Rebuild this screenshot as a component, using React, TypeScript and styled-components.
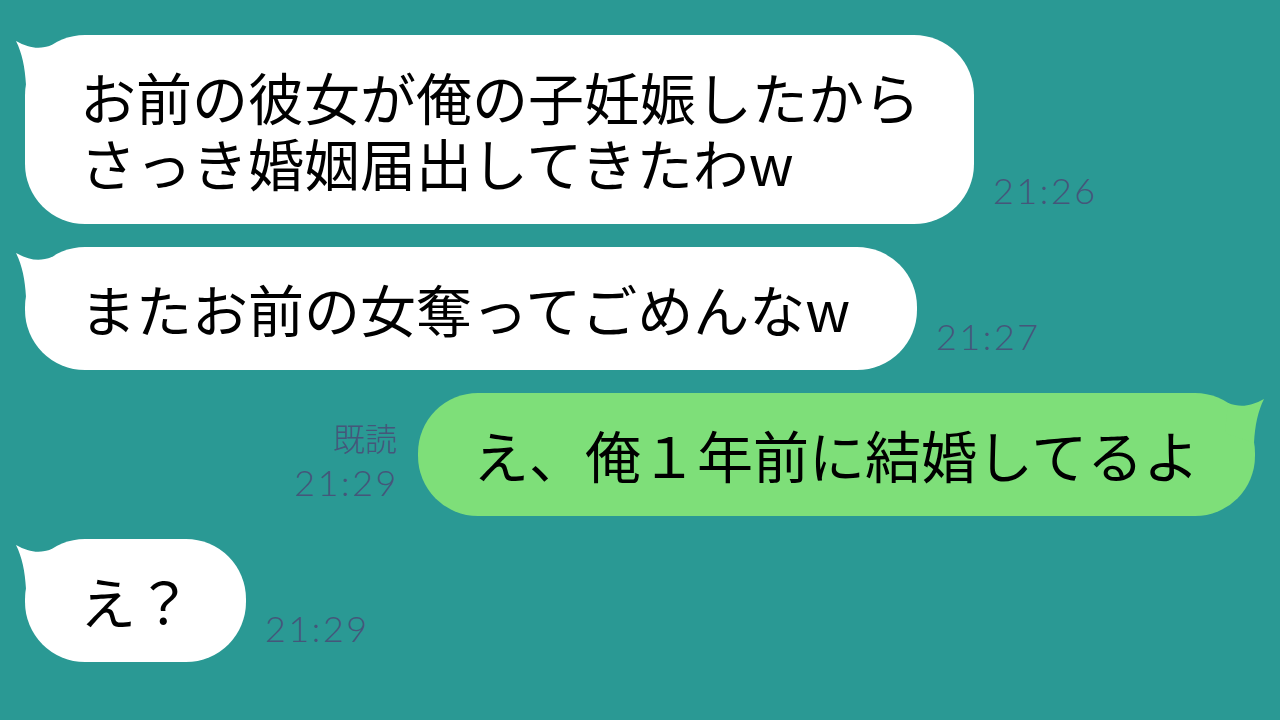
import React from "react";
import styled, { createGlobalStyle } from "styled-components";

const Global = createGlobalStyle`
  html, body { margin: 0; padding: 0; }
  body { background: #2a9994; overflow: hidden; }
`;

const Screen = styled.div`
  width: 1280px;
  height: 720px;
  background: #2a9994;
  display: flex;
  flex-direction: column;
  gap: 23px;
  padding-top: 35px;
  box-sizing: border-box;
  font-family: "Noto Sans CJK JP", "Noto Sans", sans-serif;
`;

const Row = styled.div<{ $sent?: boolean }>`
  display: flex;
  align-items: flex-end;
  justify-content: ${(p) => (p.$sent ? "flex-end" : "flex-start")};
  padding: 0 25px;
  gap: 19px;
`;

const Bubble = styled.div<{ $sent?: boolean; $w: number }>`
  position: relative;
  width: ${(p) => p.$w}px;
  box-sizing: border-box;
  padding: 28px 0 29px 55px;
  background: ${(p) => (p.$sent ? "#7edf79" : "#ffffff")};
  border-radius: 60px;
  color: #000;
  font-size: 56px;
  line-height: 66px;
  white-space: nowrap;
`;

const Tail = styled.svg<{ $sent?: boolean }>`
  position: absolute;
  top: 0;
  width: 60px;
  height: 60px;
  overflow: visible;
  ${(p) => (p.$sent ? "right: 0; transform: scaleX(-1);" : "left: 0;")}
`;

const Meta = styled.div<{ $sent?: boolean }>`
  display: flex;
  flex-direction: column;
  align-items: ${(p) => (p.$sent ? "flex-end" : "flex-start")};
  color: #45567a;
  margin-bottom: 12px;
`;

const Read = styled.span`
  font-family: "Noto Sans CJK JP", "Noto Sans", sans-serif;
  font-weight: 300;
  font-size: 32px;
  line-height: normal;
  margin-right: 2px;
`;

const Time = styled.span`
  font-family: Lato, "Noto Sans", sans-serif;
  font-weight: 300;
  font-size: 36px;
  line-height: normal;
  letter-spacing: 2.5px;
`;

function BubbleTail({ sent, color }: { sent?: boolean; color: string }) {
  return (
    <Tail $sent={sent} viewBox="0 0 60 60">
      <path
        d="M -9 6 C 4 13, 14 15, 27 10 L 30 40 L 1 50 C 0 32, -3 18, -9 6 Z"
        fill={color}
      />
    </Tail>
  );
}

export default function App() {
  return (
    <>
      <Global />
      <Screen>
        <Row>
          <Bubble $w={949}>
            <BubbleTail color="#ffffff" />
            お前の彼女が俺の子妊娠したから
            <br />
            さっき婚姻届出してきたわw
          </Bubble>
          <Meta>
            <Time>21:26</Time>
          </Meta>
        </Row>
        <Row>
          <Bubble $w={892}>
            <BubbleTail color="#ffffff" />
            またお前の女奪ってごめんなw
          </Bubble>
          <Meta>
            <Time>21:27</Time>
          </Meta>
        </Row>
        <Row $sent>
          <Meta $sent>
            <Read>既読</Read>
            <Time>21:29</Time>
          </Meta>
          <Bubble $sent $w={837}>
            <BubbleTail sent color="#7edf79" />
            え、俺１年前に結婚してるよ
          </Bubble>
        </Row>
        <Row>
          <Bubble $w={221}>
            <BubbleTail color="#ffffff" />
            え？
          </Bubble>
          <Meta>
            <Time>21:29</Time>
          </Meta>
        </Row>
      </Screen>
    </>
  );
}
